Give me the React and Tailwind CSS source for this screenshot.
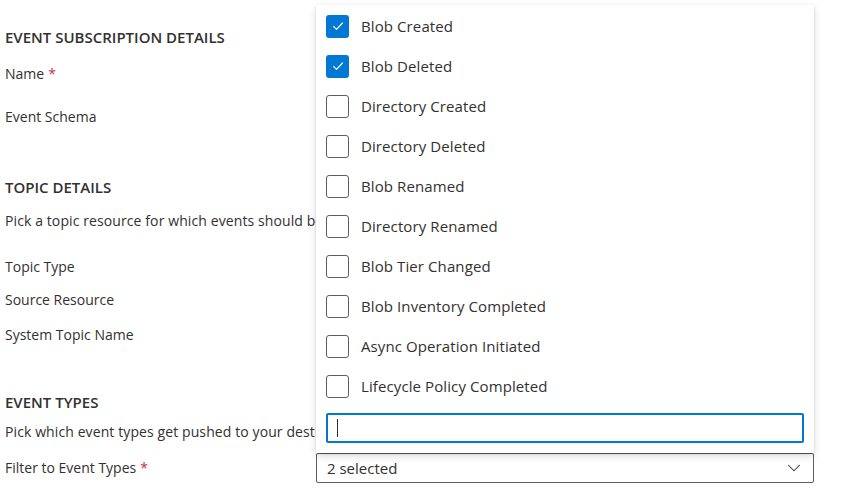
import { ChevronDown } from 'lucide-react';

const eventTypes = [
  { label: 'Blob Created', checked: true },
  { label: 'Blob Deleted', checked: true },
  { label: 'Directory Created', checked: false },
  { label: 'Directory Deleted', checked: false },
  { label: 'Blob Renamed', checked: false },
  { label: 'Directory Renamed', checked: false },
  { label: 'Blob Tier Changed', checked: false },
  { label: 'Blob Inventory Completed', checked: false },
  { label: 'Async Operation Initiated', checked: false },
  { label: 'Lifecycle Policy Completed', checked: false },
];

function Checkbox({ checked }) {
  if (checked) {
    return (
      <span className="flex h-[23px] w-[23px] shrink-0 items-center justify-center rounded-[3px] bg-[#0078d4]">
        <svg width="14" height="14" viewBox="0 0 14 14" fill="none">
          <path d="M2.5 7.3l3 3 6-6.3" stroke="white" strokeWidth="1.2" strokeLinecap="round" strokeLinejoin="round" />
        </svg>
      </span>
    );
  }
  return <span className="h-[23px] w-[23px] shrink-0 rounded-[3px] border border-[#605e5c] bg-white" />;
}

function Required() {
  return <span className="ml-1 text-[#c4314b]">*</span>;
}

export default function App() {
  return (
    <div
      className="relative h-[500px] w-[850px] overflow-hidden bg-white text-[14px] leading-5 text-[#323130]"
      style={{ fontFamily: '"Open Sans", "Noto Sans", Arial, sans-serif' }}
    >
      <div className="flex flex-col pl-[5px] pt-[27px]">
        <div className="text-[15px] font-semibold">EVENT SUBSCRIPTION DETAILS</div>
        <div className="mt-[17px]">
          Name<Required />
        </div>
        <div className="mt-[23px]">Event Schema</div>

        <div className="mt-[50px] text-[15px] font-semibold">TOPIC DETAILS</div>
        <div className="mt-[14px] w-[311px] overflow-hidden whitespace-nowrap tracking-[0.1px]">
          Pick a topic resource for which events should be pushed to your destination.
        </div>
        <div className="mt-[26px]">Topic Type</div>
        <div className="mt-[13px]">Source Resource</div>
        <div className="mt-[15px]">System Topic Name</div>

        <div className="mt-[47px] text-[15px] font-semibold">EVENT TYPES</div>
        <div className="mt-[10px] w-[311px] overflow-hidden whitespace-nowrap tracking-[0.1px]">
          Pick which event types get pushed to your destination. Learn more
        </div>
        <div className="mt-[11px] flex items-center">
          <div className="w-[311px]">
            Filter to Event Types<Required />
          </div>
          <div className="flex h-[30px] w-[498px] items-center justify-between rounded-[2px] border border-[#605e5c] bg-white pl-[10px] pr-[8px] text-[15px]">
            <span>2 selected</span>
            <ChevronDown size={22} strokeWidth={1.1} className="text-[#323130]" />
          </div>
        </div>
      </div>

      <div className="absolute left-[316px] top-[5px] flex h-[448px] w-[498px] flex-col bg-white pt-px shadow-[0_3px_8px_rgba(0,0,0,0.14),0_0.6px_2px_rgba(0,0,0,0.12)]">
        {eventTypes.map((t) => (
          <div key={t.label} className="flex h-10 items-center gap-3 pl-[10px]">
            <Checkbox checked={t.checked} />
            <span className="text-[15px] tracking-[0.1px]">{t.label}</span>
          </div>
        ))}
        <div className="ml-[10px] mt-[7px] flex h-[30px] w-[478px] items-center rounded-[2px] border-2 border-[#0078d4] px-[9px]">
          <span className="h-[18px] w-px bg-[#323130]" />
        </div>
      </div>
    </div>
  );
}
